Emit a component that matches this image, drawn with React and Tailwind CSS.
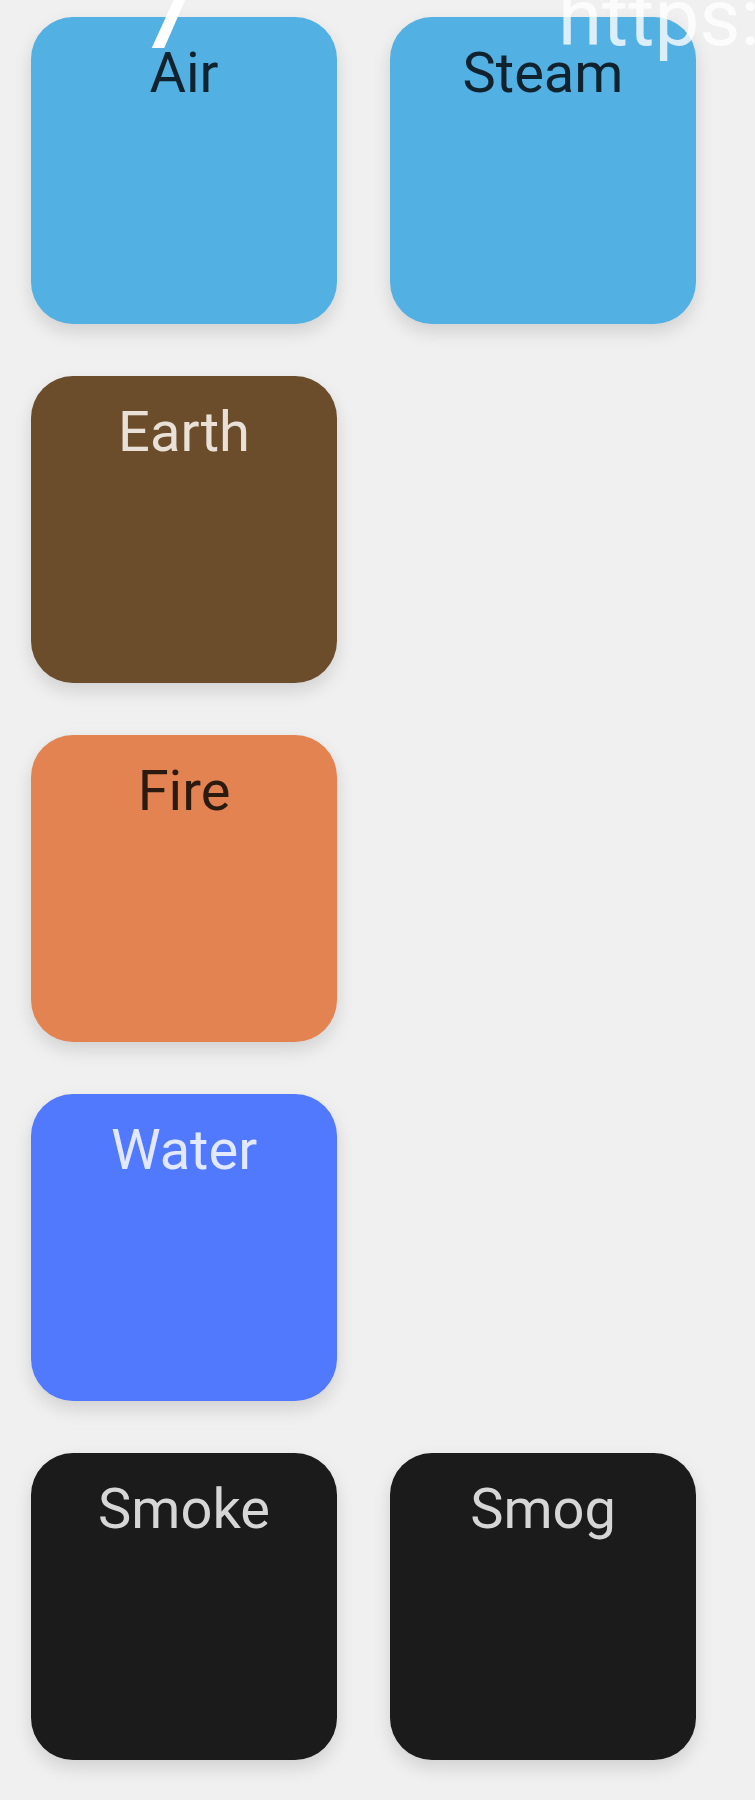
import React from 'react';

const rows = [
  [
    { name: 'Air', bg: 'bg-[#52b0e3]', text: 'text-[#10222e]' },
    { name: 'Steam', bg: 'bg-[#52b0e3]', text: 'text-[#10222e]' },
  ],
  [{ name: 'Earth', bg: 'bg-[#6b4c2b]', text: 'text-[#e9e1d8]' }],
  [{ name: 'Fire', bg: 'bg-[#e38352]', text: 'text-[#2a1a10]' }],
  [{ name: 'Water', bg: 'bg-[#5079fe]', text: 'text-[#e2e8ff]' }],
  [
    { name: 'Smoke', bg: 'bg-[#1b1b1b]', text: 'text-[#d6d6d6]' },
    { name: 'Smog', bg: 'bg-[#1b1b1b]', text: 'text-[#d6d6d6]' },
  ],
];

const ElementCard = ({ name, bg, text }) => (
  <div
    className={`${bg} w-[306px] h-[307px] rounded-[42px] shadow-[0_8px_18px_rgba(0,0,0,0.13)] flex justify-center pt-[28px]`}
  >
    <span className={`${text} text-[56px] leading-none`}>{name}</span>
  </div>
);

export default function App() {
  return (
    <div className="relative min-h-[1800px] bg-[#f0f0f0] overflow-hidden font-['Roboto',_'Liberation_Sans',_sans-serif]">
      <div className="flex flex-col gap-[52px] pl-[31px] pt-[17px]">
        {rows.map((row, i) => (
          <div key={i} className="flex gap-[53px]">
            {row.map((el) => (
              <ElementCard key={el.name} {...el} />
            ))}
          </div>
        ))}
      </div>

      {/* overlay text bleeding in from above */}
      <span className="absolute left-[140px] top-[-36px] text-[100px] leading-none text-white font-medium">
        7
      </span>
      <span className="absolute left-[558px] top-[-22px] text-[80px] leading-none text-white/80 whitespace-nowrap">
        https:
      </span>
    </div>
  );
}
